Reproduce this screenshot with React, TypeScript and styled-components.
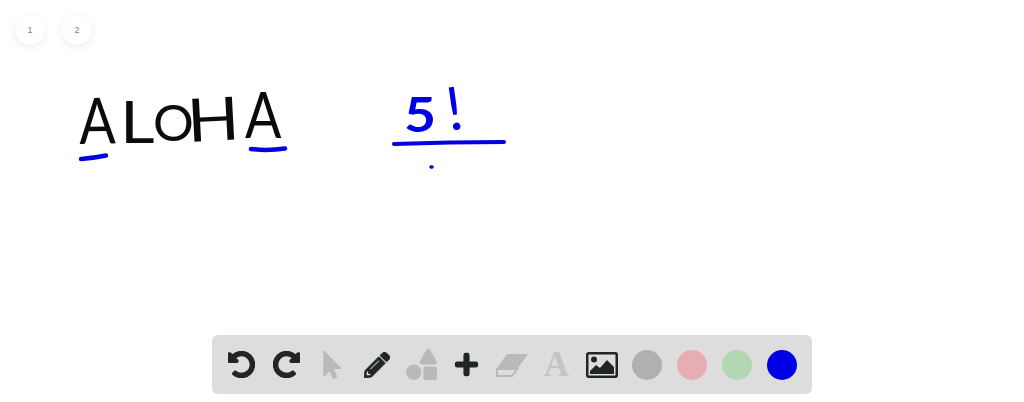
import React from 'react';
import styled, { createGlobalStyle } from 'styled-components';
import { FaMousePointer, FaPencilAlt, FaPlus, FaRedoAlt, FaShapes, FaUndoAlt } from 'react-icons/fa';

const GlobalStyle = createGlobalStyle`
  html, body {
    margin: 0;
    background: #ffffff;
    font-family: "Liberation Sans", Arial, sans-serif;
  }
`;

const Page = styled.div`
  position: relative;
  width: 1024px;
  height: 402px;
  overflow: hidden;
  background: #ffffff;
  display: flex;
  flex-direction: column;
  justify-content: space-between;
  align-items: center;
`;

const PageTabs = styled.div`
  align-self: flex-start;
  display: flex;
  gap: 17px;
  padding: 15px 0 0 15px;
`;

const PageTab = styled.div`
  width: 30px;
  height: 30px;
  border-radius: 50%;
  background: #ffffff;
  box-shadow: 0 2px 7px rgba(60, 60, 90, 0.1);
  color: #7a7ab8;
  font-size: 9px;
  display: flex;
  align-items: center;
  justify-content: center;
`;

const Board = styled.div`
  position: absolute;
  inset: 0;
`;

const Ink = styled.span<{ $x: number; $y: number; $size: number; $tilt?: number; $wide?: number; $color?: string; $heavy?: boolean }>`
  position: absolute;
  left: ${(p) => p.$x}px;
  top: ${(p) => p.$y}px;
  font-family: Lato, "Noto Sans", sans-serif;
  font-weight: ${(p) => (p.$heavy ? 700 : 400)};
  font-size: ${(p) => p.$size}px;
  line-height: 1;
  color: ${(p) => p.$color || '#0b0b0b'};
  transform-origin: left center;
  transform: rotate(${(p) => p.$tilt || 0}deg) scaleX(${(p) => p.$wide || 1});
`;

const Strokes = styled.svg`
  position: absolute;
  inset: 0;
  width: 1024px;
  height: 402px;
`;

const Toolbar = styled.div`
  width: 600px;
  height: 59px;
  margin-bottom: 8px;
  background: #dddddd;
  border-radius: 6px;
  display: grid;
  grid-template-columns: repeat(13, 45px);
  align-items: center;
  justify-items: center;
  padding: 0 7px;
  box-sizing: border-box;
  position: relative;
`;

const Tool = styled.div<{ $off?: boolean; $size?: number }>`
  height: 34px;
  display: flex;
  align-items: center;
  justify-content: center;
  color: ${(p) => (p.$off ? '#b9b9b9' : '#222526')};
  font-size: ${(p) => p.$size || 26}px;

  svg {
    stroke: currentColor;
  }
`;

const TextTool = styled(Tool)`
  font-family: "Liberation Serif", serif;
  font-weight: 700;
  font-size: 35px;
  color: #c4c4c4;
`;

const Swatch = styled.div<{ $color: string }>`
  width: 30px;
  height: 30px;
  border-radius: 50%;
  background: ${(p) => p.$color};
`;

const EraserIcon: React.FC = () => (
  <svg width="32" height="24" viewBox="0 0 32 24" fill="none" style={{ stroke: 'none' }}>
    <path d="M11 1 H32 L22 15 H1 Z" fill="#b9b9b9" />
    <path d="M1 16 H21 L16 23 H1 L1 18 Z" fill="none" stroke="#b9b9b9" strokeWidth="2" />
  </svg>
);

const ImageIcon: React.FC = () => (
  <svg width="32" height="26" viewBox="0 0 32 26" style={{ stroke: 'none' }}>
    <rect x="1.25" y="1.25" width="29.5" height="23.5" rx="1.5" fill="none" stroke="#222526" strokeWidth="2.5" />
    <circle cx="8" cy="7.5" r="3" fill="#222526" />
    <path d="M4 22 V19 L10 13 L14 16 L21 8 L28 15 V22 Z" fill="#222526" />
  </svg>
);

const App: React.FC = () => (
  <Page>
    <GlobalStyle />
    <PageTabs>
      <PageTab>1</PageTab>
      <PageTab>2</PageTab>
    </PageTabs>
    <Board>
      <Ink $x={79} $y={88} $size={64} $wide={0.84} $tilt={-1}>A</Ink>
      <Ink $x={120} $y={92} $size={58} $wide={1.16}>L</Ink>
      <Ink $x={153} $y={96} $size={51}>O</Ink>
      <Ink $x={187} $y={89} $size={60} $wide={1.14} $tilt={-3}>H</Ink>
      <Ink $x={245} $y={82} $size={64} $wide={0.84}>A</Ink>
      <Ink $x={404} $y={90} $size={48} $wide={1.15} $heavy $color="#0000e6">5</Ink>
      <Ink $x={446} $y={78} $size={60} $tilt={-8} $color="#0000e6">!</Ink>
      <Strokes viewBox="0 0 1024 402" fill="none" stroke="#0000e0" strokeLinecap="round">
        <path d="M81 159 Q94 158 106 155.500" strokeWidth="4.500" />
        <path d="M251 149 Q268 151 285 148.500" strokeWidth="4.500" />
        <path d="M394 144 Q450 142 504 142" strokeWidth="4" />
        <path d="M431 167 L432 167" strokeWidth="3.500" />
      </Strokes>
    </Board>
    <Toolbar>
      <Tool $size={27}><FaUndoAlt strokeWidth={24} /></Tool>
      <Tool $size={27}><FaRedoAlt strokeWidth={24} /></Tool>
      <Tool $off $size={28}><FaMousePointer /></Tool>
      <Tool $size={26}><FaPencilAlt strokeWidth={16} /></Tool>
      <Tool $off $size={31}><FaShapes /></Tool>
      <Tool $size={25}><FaPlus strokeWidth={30} /></Tool>
      <Tool $off><EraserIcon /></Tool>
      <TextTool>A</TextTool>
      <Tool><ImageIcon /></Tool>
      <Swatch $color="#b0b0b0" />
      <Swatch $color="#e6aeb3" />
      <Swatch $color="#b3d6b3" />
      <Swatch $color="#0000e6" />
    </Toolbar>
  </Page>
);

export default App;
